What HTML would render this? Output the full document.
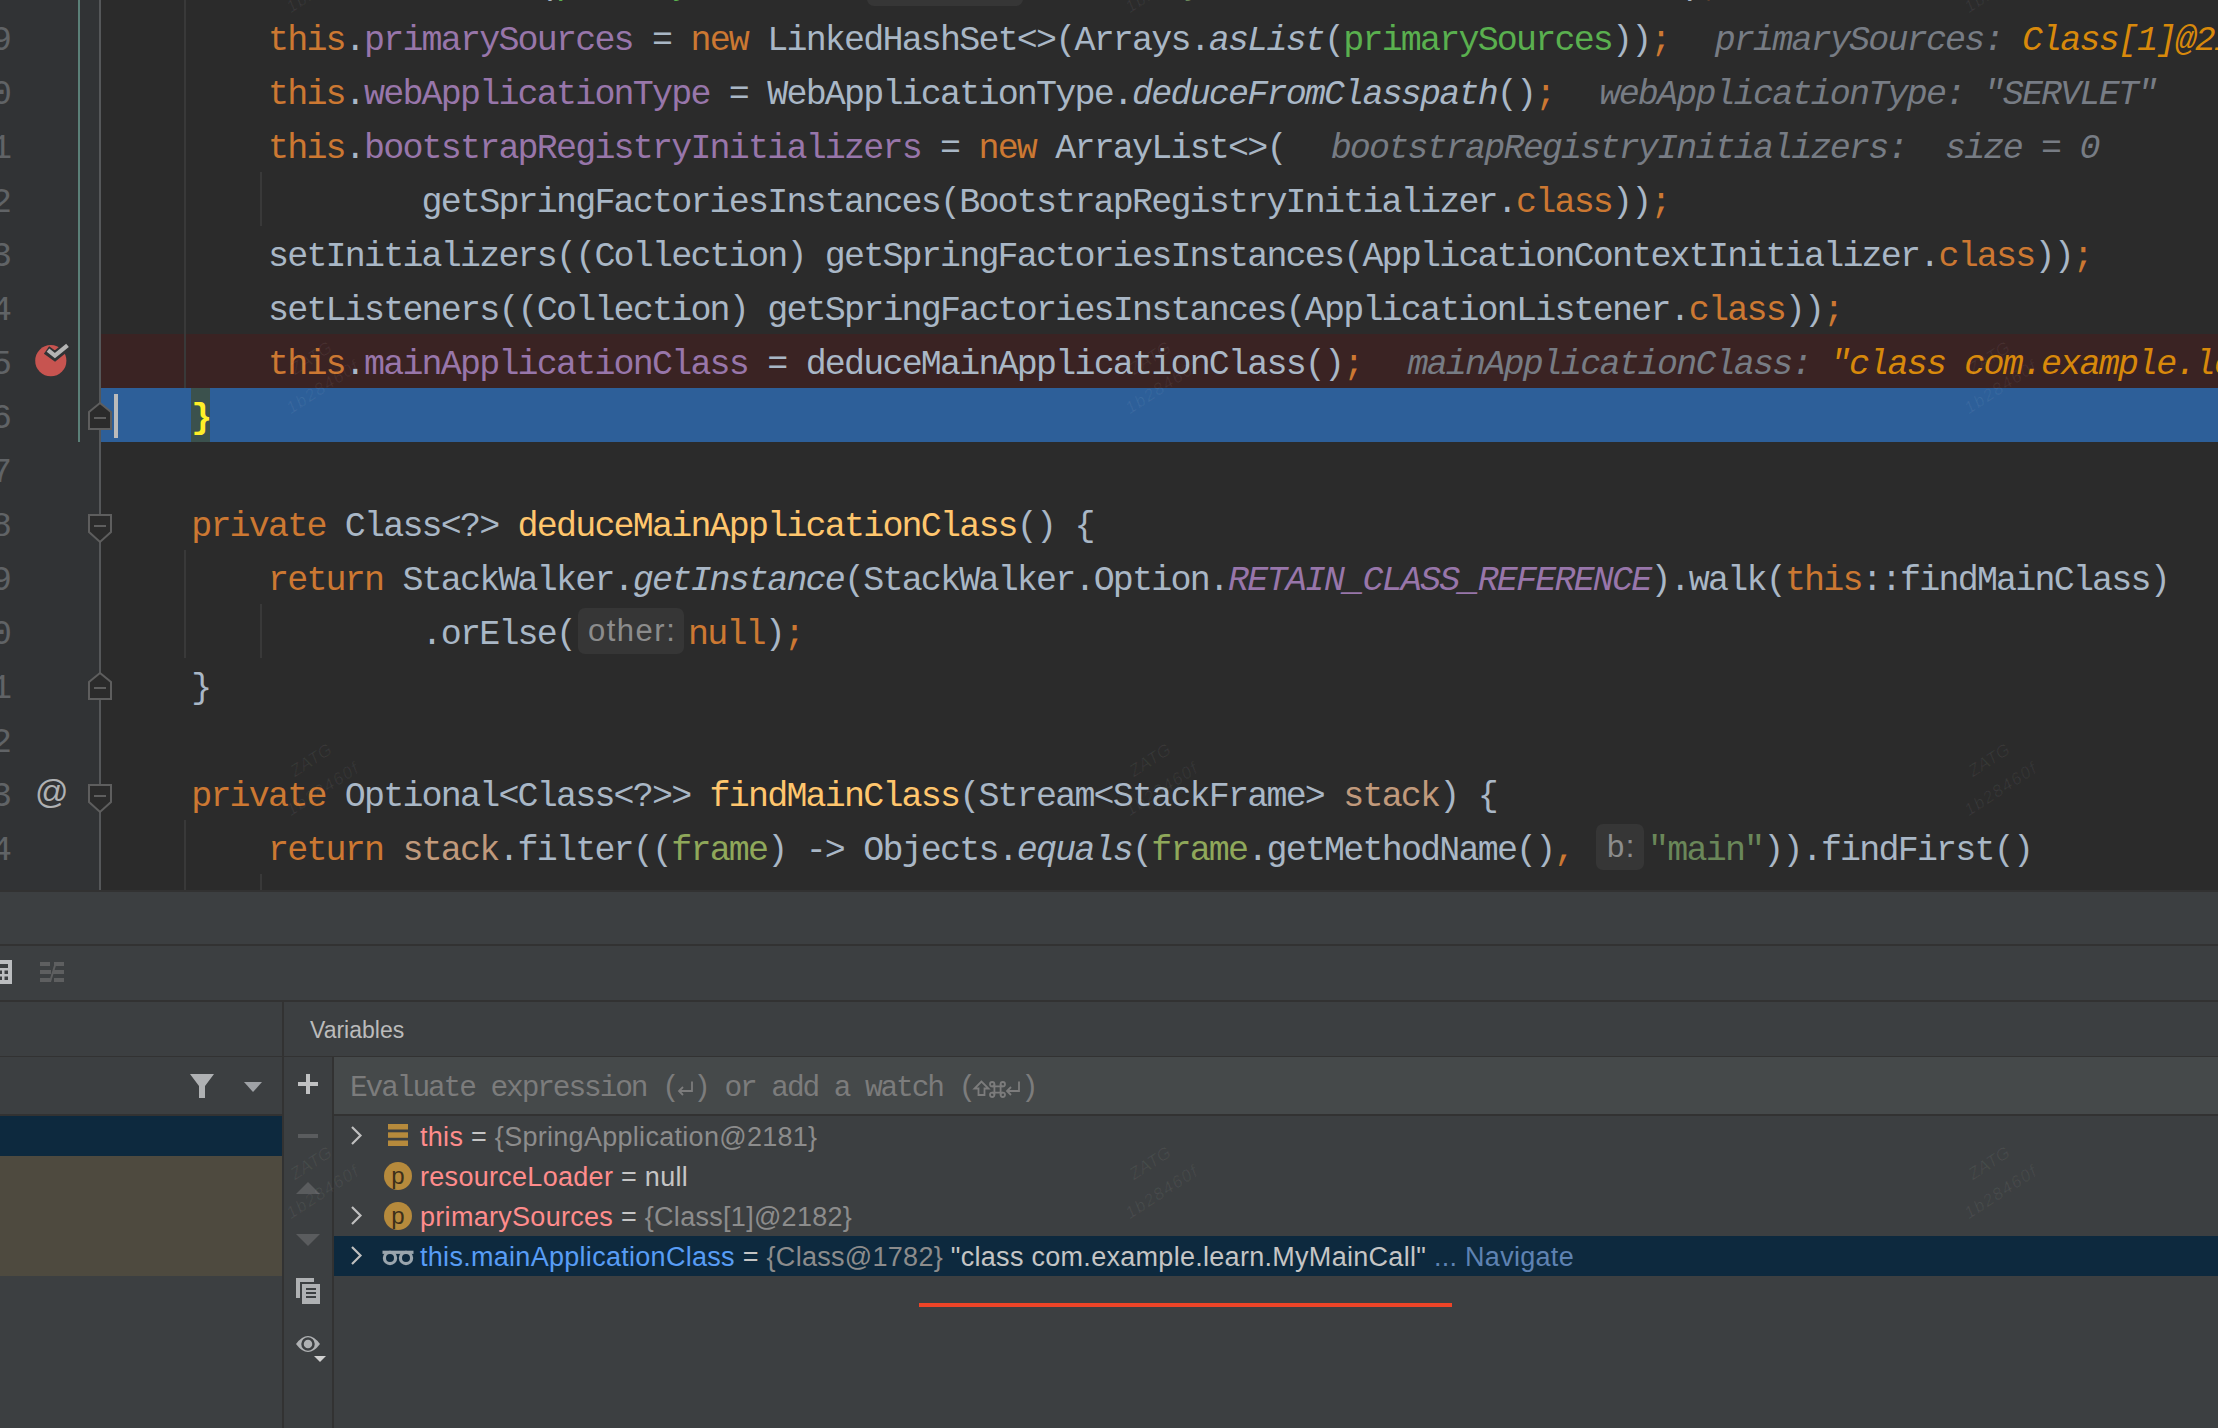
<!DOCTYPE html>
<html><head><meta charset="utf-8">
<style>
*{margin:0;padding:0;box-sizing:border-box}
html,body{width:2218px;height:1428px;overflow:hidden;background:#3C3F41}
.a{position:absolute}
#ed{position:absolute;left:0;top:0;width:2218px;height:890px;background:#2B2B2B;overflow:hidden}
#gut{position:absolute;left:0;top:0;width:100px;height:890px;background:#313335}
.ln{position:absolute;height:54px;line-height:54px;white-space:pre;font-family:"Liberation Mono",monospace;font-size:35px;letter-spacing:-1.803px;color:#A9B7C6}
.k{color:#CC7832}
.f{color:#9876AA}
.m{color:#FFC66D}
.i{font-style:italic}
.p{color:#5AB04F}
.s{color:#6A8759}
.hint{color:#777C84;font-style:italic}
.hv{color:#D8890B;font-style:italic}
.gn{position:absolute;left:-9px;width:20px;height:54px;line-height:54px;font-family:"Liberation Mono",monospace;font-size:35px;letter-spacing:-1.803px;color:#606366}
.ig{position:absolute;width:2px;background:#393939}
.inl{display:inline-block;height:10px}
.tr{left:420px;height:40px;line-height:42px;font-size:27px;letter-spacing:0.29px;white-space:pre;color:#C5C5C5}
.wm{position:absolute;font-family:"Liberation Sans",sans-serif;font-style:italic;font-size:17px;line-height:14px;height:14px;color:rgba(255,255,255,0.06);transform:rotate(-33deg);transform-origin:0 100%;white-space:pre;letter-spacing:0.5px}
.ui{font-family:"Liberation Sans",sans-serif}
</style></head><body>
<div id="ed">
  <div id="gut"></div>
  <!-- teal vcs line -->
  <div class="a" style="left:78px;top:0;width:2px;height:442px;background:#5B8078"></div>
  <!-- fold line -->
  <div class="a" style="left:99px;top:0;width:2px;height:890px;background:#555759"></div>
  <!-- line backgrounds -->
  <div class="a" style="left:101px;top:334px;width:2117px;height:54px;background:#3A2323"></div>
  <div class="a" style="left:101px;top:388px;width:2117px;height:54px;background:#2D5F99"></div>
  <div class="a" style="left:191px;top:388px;width:19px;height:54px;background:#3B514D"></div>
  <!-- indent guides -->
  <div class="ig" style="left:184px;top:0;height:388px"></div>
  <div class="ig" style="left:260px;top:172px;height:54px"></div>
  <div class="ig" style="left:184px;top:550px;height:108px"></div>
  <div class="ig" style="left:260px;top:604px;height:54px"></div>
  <div class="ig" style="left:184px;top:820px;height:70px"></div>
  <div class="ig" style="left:260px;top:874px;height:16px"></div>
  <!-- caret -->
  <div class="a" style="left:114px;top:394px;width:4px;height:44px;background:#BBBBBB"></div>

  <!-- code lines: top = 10 + 54*(n-69) -->
  <div class="ln" style="left:191.2px;top:-42px">    Assert.<span class="i">notNull</span>(<span class="p">primarySources</span><span class="k">,</span> <span class="inl" style="width:185.2px"></span><span class="s">"PrimarySources must not be null"</span>)<span class="k">;</span></div>
  <div class="ln" style="left:191.2px;top:14px">    <span class="k">this</span>.<span class="f">primarySources</span> = <span class="k">new</span> LinkedHashSet&lt;&gt;(Arrays.<span class="i">asList</span>(<span class="p">primarySources</span>))<span class="k">;</span>  <span class="hint" style="margin-left:6.6px">primarySources: </span><span class="hv">Class[1]@2181}</span></div>
  <div class="ln" style="left:191.2px;top:68px">    <span class="k">this</span>.<span class="f">webApplicationType</span> = WebApplicationType.<span class="i">deduceFromClasspath</span>()<span class="k">;</span>  <span class="hint" style="margin-left:6.6px">webApplicationType: "SERVLET"</span></div>
  <div class="ln" style="left:191.2px;top:122px">    <span class="k">this</span>.<span class="f">bootstrapRegistryInitializers</span> = <span class="k">new</span> ArrayList&lt;&gt;(  <span class="hint" style="margin-left:6.6px">bootstrapRegistryInitializers:  size = 0</span></div>
  <div class="ln" style="left:191.2px;top:176px">            getSpringFactoriesInstances(BootstrapRegistryInitializer.<span class="k">class</span>))<span class="k">;</span></div>
  <div class="ln" style="left:191.2px;top:230px">    setInitializers((Collection) getSpringFactoriesInstances(ApplicationContextInitializer.<span class="k">class</span>))<span class="k">;</span></div>
  <div class="ln" style="left:191.2px;top:284px">    setListeners((Collection) getSpringFactoriesInstances(ApplicationListener.<span class="k">class</span>))<span class="k">;</span></div>
  <div class="ln" style="left:191.2px;top:338px">    <span class="k">this</span>.<span class="f">mainApplicationClass</span> = deduceMainApplicationClass()<span class="k">;</span>  <span class="hint" style="margin-left:6.6px">mainApplicationClass: </span><span class="hv">"class com.example.learn.MyMainCall"</span></div>
  <div class="ln" style="left:191.2px;top:392px;color:#FFEF28;font-weight:bold">}</div>
  <div class="ln" style="left:191.2px;top:500px"><span class="k">private</span> Class&lt;?&gt; <span class="m">deduceMainApplicationClass</span>() {</div>
  <div class="ln" style="left:191.2px;top:554px">    <span class="k">return</span> StackWalker.<span class="i">getInstance</span>(StackWalker.Option.<span class="f i">RETAIN_CLASS_REFERENCE</span>).walk(<span class="k">this</span>::findMainClass)</div>
  <div class="ln" style="left:191.2px;top:608px">            .orElse(<span class="inl" style="width:112.8px"></span><span class="k">null</span>)<span class="k">;</span></div>
  <div class="ln" style="left:191.2px;top:662px">}</div>
  <div class="ln" style="left:191.2px;top:770px"><span class="k">private</span> Optional&lt;Class&lt;?&gt;&gt; <span class="m">findMainClass</span>(Stream&lt;StackFrame&gt; <span style="color:#C19A7C">stack</span>) {</div>
  <div class="ln" style="left:191.2px;top:824px">    <span class="k">return</span> <span style="color:#C19A7C">stack</span>.filter((<span style="color:#8FA85A">frame</span>) -&gt; Objects.<span class="i">equals</span>(<span style="color:#8FA85A">frame</span>.getMethodName()<span class="k">,</span> <span class="inl" style="width:55.2px"></span><span class="s">"main"</span>)).findFirst()</div>


  <div class="ln" style="left:191.2px;top:880px">            .map(StackWalker.StackFrame::getDeclaringClass)<span class="k">;</span></div>
  <!-- inlay boxes -->
  <div class="a" style="left:578px;top:608px;width:106px;height:46px;border-radius:7px;background:#363636"></div>
  <div class="a ui" style="left:588px;top:608px;height:46px;line-height:46px;font-size:31px;letter-spacing:1.5px;color:#8C8C8C">other:</div>
  <div class="a" style="left:1596px;top:824px;width:48px;height:46px;border-radius:7px;background:#363636"></div>
  <div class="a ui" style="left:1607px;top:824px;height:46px;line-height:46px;font-size:31px;letter-spacing:1.5px;color:#8C8C8C">b:</div>
  <!-- line 68 inlay box (only bottom visible) -->
  <div class="a" style="left:867px;top:-40px;width:156px;height:46px;border-radius:7px;background:#363636"></div>
  <!-- gutter icons -->
  <svg class="a" style="left:0;top:0" width="130" height="890" viewBox="0 0 130 890">
    <g fill="#2B2B2B" stroke="#5E5E5E" stroke-width="2">
      <path d="M100,403 L111,412 L111,429 L89,429 L89,412 Z"/>
      <path d="M89,515 L111,515 L111,532 L100,542 L89,532 Z"/>
      <path d="M100,673 L111,682 L111,699 L89,699 L89,682 Z"/>
      <path d="M89,785 L111,785 L111,802 L100,812 L89,802 Z"/>
    </g>
    <g stroke="#5E5E5E" stroke-width="2">
      <path d="M94,418 L106,418 M94,526 L106,526 M94,688 L106,688 M94,796 L106,796"/>
    </g>
    <circle cx="50.8" cy="360.7" r="15.6" fill="#C75450"/>
    <path d="M46.5,350 L54.9,356 L68,345.5" fill="none" stroke="#313335" stroke-width="9" stroke-linecap="butt"/>
    <path d="M48,350.2 L54.9,355.6 L67.5,345.3" fill="none" stroke="#B4B4B4" stroke-width="4.2"/>
  </svg>
  <div class="a ui" style="left:35px;top:772px;font-size:33px;line-height:40px;color:#AFB1B3">@</div>
  <!-- line numbers -->
  <div class="gn" style="top:14px">9</div>
  <div class="gn" style="top:68px">0</div>
  <div class="gn" style="top:122px">1</div>
  <div class="gn" style="top:176px">2</div>
  <div class="gn" style="top:230px">3</div>
  <div class="gn" style="top:284px">4</div>
  <div class="gn" style="top:338px">5</div>
  <div class="gn" style="top:392px">6</div>
  <div class="gn" style="top:446px">7</div>
  <div class="gn" style="top:500px">8</div>
  <div class="gn" style="top:554px">9</div>
  <div class="gn" style="top:608px">0</div>
  <div class="gn" style="top:662px">1</div>
  <div class="gn" style="top:716px">2</div>
  <div class="gn" style="top:770px">3</div>
  <div class="gn" style="top:824px">4</div>
</div>

<!-- bottom panel -->
<div class="a" style="left:0;top:890px;width:2218px;height:2px;background:#323232"></div>
<div class="a" style="left:0;top:944px;width:2218px;height:2px;background:#323232"></div>
<div class="a" style="left:0;top:1000px;width:2218px;height:2px;background:#323232"></div>
<div class="a" style="left:282px;top:1002px;width:2px;height:426px;background:#323232"></div>
<div class="a" style="left:0;top:1056px;width:2218px;height:1px;background:#323232"></div>
<div class="a" style="left:0;top:1114px;width:282px;height:2px;background:#323232"></div>
<div class="a" style="left:332px;top:1057px;width:2px;height:371px;background:#323232"></div>
<div class="a" style="left:334px;top:1057px;width:1884px;height:57px;background:#45494A"></div>
<div class="a" style="left:334px;top:1114px;width:1884px;height:2px;background:#323232"></div>
<div class="a" style="left:0;top:1116px;width:282px;height:40px;background:#0D293E"></div>
<div class="a" style="left:0;top:1156px;width:282px;height:120px;background:#4E4A3F"></div>
<div class="a" style="left:334px;top:1236px;width:1884px;height:40px;background:#0D293E"></div>
<div class="a" style="left:919px;top:1303px;width:533px;height:4px;background:#EE4427"></div>

<div class="a ui" style="left:310px;top:1014px;font-size:23px;line-height:32px;color:#BBBBBB">Variables</div>


<!-- toolbar icons -->
<svg class="a" style="left:0;top:946px" width="80" height="54" viewBox="0 946 80 54">
  <path fill="#BBBDBF" fill-rule="evenodd" d="M-12,960 H12 V984 H-12 Z M-8,964 H8 V968 H-8 Z M4.5,970.5 H8 V974 H4.5 Z M4.5,976.5 H8 V980 H4.5 Z M-2,970.5 H2 V974 H-2 Z M-2,976.5 H2 V980 H-2 Z"/>
  <g fill="#5E5F60">
    <rect x="40" y="962" width="10" height="4"/><rect x="54" y="962" width="10" height="4"/>
    <rect x="40" y="970" width="11" height="4"/><rect x="53" y="970" width="11" height="4"/>
    <rect x="40" y="978" width="10" height="4"/><rect x="54" y="978" width="10" height="4"/>
    <path d="M49,982 L55,962 L57,962 L51,982 Z"/>
  </g>
</svg>
<!-- left panel toolbar -->
<svg class="a" style="left:180px;top:1060px" width="100" height="50" viewBox="180 1060 100 50">
  <path fill="#AFB1B3" d="M190,1074 L214,1074 L205,1086 L205,1098 L199,1098 L199,1086 Z"/>
  <path fill="#9FA2A6" d="M244,1082 L262,1082 L253,1092 Z"/>
</svg>
<!-- right side toolbar -->
<svg class="a" style="left:284px;top:1060px" width="48" height="320" viewBox="284 1060 48 320">
  <path fill="#C0C1C2" d="M306,1074 H310 V1094 H306 Z M298,1082 H318 V1086 H298 Z"/>
  <rect x="298" y="1134" width="20" height="4" fill="#5A5C5E"/>
  <path fill="#5A5C5E" d="M296,1194 L320,1194 L308,1182 Z"/>
  <path fill="#5A5C5E" d="M296,1234 L320,1234 L308,1246 Z"/>
  <path fill="#AFB1B3" d="M296,1278 H314 V1282 H300 V1298 H296 Z"/>
  <rect x="302" y="1284" width="18" height="20" fill="#AFB1B3"/>
  <g fill="#3C3F41"><rect x="306" y="1288" width="10" height="2"/><rect x="306" y="1292" width="10" height="2"/><rect x="306" y="1296" width="10" height="2"/></g>
  <path fill="#AFB1B3" d="M296,1344 Q308,1328 320,1344 Q308,1360 296,1344 Z"/>
  <circle cx="308" cy="1344" r="5.5" fill="none" stroke="#3C3F41" stroke-width="2.5"/>
  <path fill="#D0D0D0" d="M314,1356 L326,1356 L320,1362 Z"/>
</svg>

<!-- evaluate expression -->
<div class="a" style="left:350px;top:1068px;height:40px;line-height:40px;white-space:pre;font-family:'Liberation Mono',monospace;font-size:29.5px;letter-spacing:-2.1px;color:#7C7C7C">Evaluate expression (<span style="display:inline-block;width:15.6px"></span>) or add a watch (<span style="display:inline-block;width:46.8px"></span>)</div>
<svg class="a" style="left:660px;top:1070px" width="380" height="36" viewBox="660 1070 380 36">
  <g fill="none" stroke="#7C7C7C" stroke-width="1.8">
    <path d="M692,1081.5 V1091 H679 M683,1087 L679,1091 L683,1095"/>
    <path d="M1019,1081.5 V1091 H1007 M1011,1087 L1007,1091 L1011,1095"/>
    <path d="M981.5,1081.5 L974.5,1088.5 H978.5 V1095 H984.5 V1088.5 H988.5 Z"/>
    <path d="M992.2,1086.4 H1002.8 M992.2,1092.6 H1002.8 M994.4,1084.2 V1094.8 M1000.6,1084.2 V1094.8"/>
    <circle cx="992.2" cy="1084.2" r="2.2"/><circle cx="1002.8" cy="1084.2" r="2.2"/>
    <circle cx="992.2" cy="1094.8" r="2.2"/><circle cx="1002.8" cy="1094.8" r="2.2"/>
  </g>
</svg>

<!-- variables tree -->
<svg class="a" style="left:340px;top:1116px" width="90" height="160" viewBox="340 1116 90 160">
  <g fill="none" stroke="#BFBFBF" stroke-width="2.2">
    <path d="M352,1127 L360.5,1135.5 L352,1144"/>
    <path d="M352,1207 L360.5,1215.5 L352,1224"/>
    <path d="M352,1247 L360.5,1255.5 L352,1264"/>
  </g>
  <g fill="#B68A3C">
    <rect x="388" y="1124" width="20" height="5.5"/><rect x="388" y="1132.3" width="20" height="5.5"/><rect x="388" y="1140.5" width="20" height="5.5"/>
    <circle cx="398" cy="1176" r="14"/>
    <circle cx="398" cy="1216" r="14"/>
  </g>
  <g fill="none" stroke="#9AA5AD" stroke-width="3.2">
    <circle cx="390" cy="1258" r="5.6"/><circle cx="406" cy="1258" r="5.6"/>
    <path d="M382.5,1252.3 H413.5"/>
  </g>
</svg>
<div class="a ui" style="left:389px;top:1156px;width:18px;text-align:center;font-size:24px;line-height:40px;color:#3D301A">p</div>
<div class="a ui" style="left:389px;top:1196px;width:18px;text-align:center;font-size:24px;line-height:40px;color:#3D301A">p</div>
<div class="a ui tr" style="top:1116px"><span style="color:#FF8C8C">this</span> = <span style="color:#8C8C8C">{SpringApplication@2181}</span></div>
<div class="a ui tr" style="top:1156px"><span style="color:#FF8C8C">resourceLoader</span> = null</div>
<div class="a ui tr" style="top:1196px"><span style="color:#FF8C8C">primarySources</span> = <span style="color:#8C8C8C">{Class[1]@2182}</span></div>
<div class="a ui tr" style="top:1236px"><span style="color:#589DF6">this.mainApplicationClass</span> = <span style="color:#8C8C8C">{Class@1782}</span> "class com.example.learn.MyMainCall" <span style="color:#5E82B2">... Navigate</span></div>

<!-- watermarks -->
<div class="wm" style="left:296.0px;top:-37.6px">ZATG</div><div class="wm" style="left:292.0px;top:1.0px;letter-spacing:1.6px">1b28460f</div><div class="wm" style="left:296.0px;top:363.4px">ZATG</div><div class="wm" style="left:292.0px;top:402.0px;letter-spacing:1.6px">1b28460f</div><div class="wm" style="left:296.0px;top:764.9px">ZATG</div><div class="wm" style="left:292.0px;top:803.5px;letter-spacing:1.6px">1b28460f</div><div class="wm" style="left:296.0px;top:1168.4px">ZATG</div><div class="wm" style="left:292.0px;top:1207.0px;letter-spacing:1.6px">1b28460f</div><div class="wm" style="left:1135.0px;top:-37.6px">ZATG</div><div class="wm" style="left:1131.0px;top:1.0px;letter-spacing:1.6px">1b28460f</div><div class="wm" style="left:1135.0px;top:363.4px">ZATG</div><div class="wm" style="left:1131.0px;top:402.0px;letter-spacing:1.6px">1b28460f</div><div class="wm" style="left:1135.0px;top:764.9px">ZATG</div><div class="wm" style="left:1131.0px;top:803.5px;letter-spacing:1.6px">1b28460f</div><div class="wm" style="left:1135.0px;top:1168.4px">ZATG</div><div class="wm" style="left:1131.0px;top:1207.0px;letter-spacing:1.6px">1b28460f</div><div class="wm" style="left:1974.0px;top:-37.6px">ZATG</div><div class="wm" style="left:1970.0px;top:1.0px;letter-spacing:1.6px">1b28460f</div><div class="wm" style="left:1974.0px;top:363.4px">ZATG</div><div class="wm" style="left:1970.0px;top:402.0px;letter-spacing:1.6px">1b28460f</div><div class="wm" style="left:1974.0px;top:764.9px">ZATG</div><div class="wm" style="left:1970.0px;top:803.5px;letter-spacing:1.6px">1b28460f</div><div class="wm" style="left:1974.0px;top:1168.4px">ZATG</div><div class="wm" style="left:1970.0px;top:1207.0px;letter-spacing:1.6px">1b28460f</div>
</body></html>
